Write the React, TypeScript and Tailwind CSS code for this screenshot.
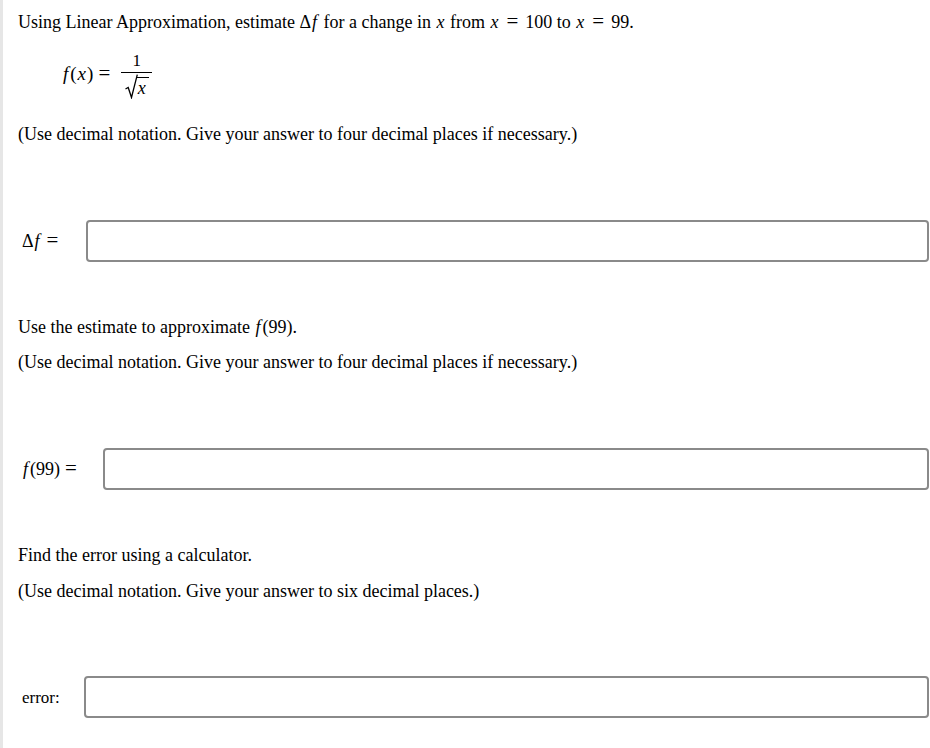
import React from 'react';

const serif = { fontFamily: '"Liberation Serif", "Times New Roman", serif' };

const I = ({ children }: { children: React.ReactNode }) => <i className="px-[1px] italic">{children}</i>;
const Eq = ({ wide }: { wide?: boolean }) => (
  <span className={`${wide ? 'mx-[7px]' : 'mx-[5px]'} text-[21px] leading-[0]`}>=</span>
);
const F = () => <i className="ml-[1px] mr-[2px] italic">f</i>;

const Sqrt = ({ children }: { children: React.ReactNode }) => (
  <span className="inline-flex items-end">
    <svg width="13" height="25" viewBox="0 0 13 25" className="mr-[-1px] block">
      <path d="M0.5 15 L3.2 13.5 L6.5 23.5 L12.3 0.6" fill="none" stroke="#000" strokeWidth="1.3" />
    </svg>
    <span className="mb-[1px] border-t border-black pl-[1px] pr-[3px] text-[18px] leading-[20px] italic">{children}</span>
  </span>
);

const AnswerRow = ({ label, gap }: { label: React.ReactNode; gap: string }) => (
  <div className={`flex items-center pl-1 ${gap}`}>
    <div className="whitespace-nowrap text-[18px] leading-[21px]">{label}</div>
    <input
      type="text"
      className="h-[42px] flex-1 rounded-[4px] border-2 border-[#8a8a8a] bg-white outline-none"
    />
  </div>
);

export default function App() {
  return (
    <div className="min-h-[748px] w-[930px] bg-white text-black" style={serif}>
      <div className="min-h-[748px] border-l-[3px] border-[#e6e6e6] pl-[15px] pr-[1px] pt-[12px] text-[18px] leading-[21px]">
        <p>
          Using Linear Approximation, estimate Δ<F /> for a change in <I>x</I> from <I>x</I>
          <Eq wide />
          100 to <I>x</I>
          <Eq wide />
          99.
        </p>

        <div className="mt-[19px] flex items-start pl-[44px]">
          <span className="mt-[11px] text-[19px] leading-[21px]">
            <F />(<I>x</I>)<Eq />
          </span>
          <span className="ml-[6px] inline-flex flex-col items-center">
            <span className="px-[3px] pb-[3px] text-[17px] leading-[17px]">1</span>
            <span className="h-px w-[31px] bg-black" />
            <span className="pt-[1px]">
              <Sqrt>x</Sqrt>
            </span>
          </span>
        </div>

        <p className="mt-[20px]">
          (Use decimal notation. Give your answer to four decimal places if necessary.)
        </p>

        <div className="mt-[75px]">
          <AnswerRow
            gap="gap-[23px]"
            label={
              <span>
                Δ<F />
                <Eq />
              </span>
            }
          />
        </div>

        <p className="mt-[55px]">
          Use the estimate to approximate <F />(99).
        </p>
        <p className="mt-[14px]">
          (Use decimal notation. Give your answer to four decimal places if necessary.)
        </p>

        <div className="mt-[75px]">
          <AnswerRow
            gap="gap-[21px]"
            label={
              <span>
                <F />(99)
                <Eq />
              </span>
            }
          />
        </div>

        <p className="mt-[55px]">Find the error using a calculator.</p>
        <p className="mt-[15px]">(Use decimal notation. Give your answer to six decimal places.)</p>

        <div className="mt-[74px]">
          <AnswerRow gap="gap-[24px]" label={<span className="text-[17px]">error:</span>} />
        </div>
      </div>
    </div>
  );
}
